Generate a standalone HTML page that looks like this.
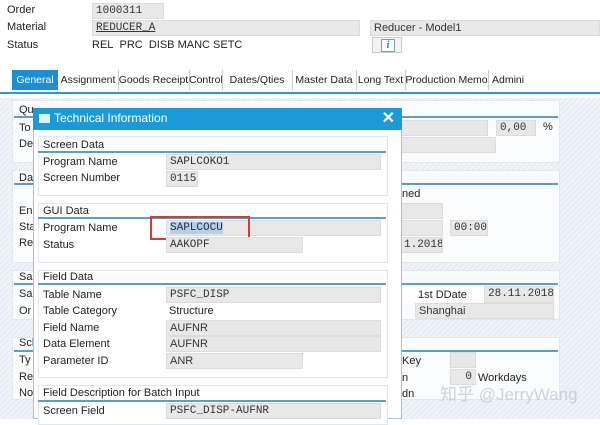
<html><head><style>
body{margin:0;width:600px;height:419px;overflow:hidden;position:relative;background:#fff;font-family:"Liberation Sans",sans-serif;font-size:11px;color:#222}
.a{position:absolute;white-space:nowrap}
.f{position:absolute;background:#e8e8e8;border:1px solid #dcdcdc;box-sizing:border-box;font-family:"Liberation Mono",monospace;font-size:11px;line-height:14px;padding-left:3px;color:#333;white-space:nowrap;overflow:hidden}
.p{position:absolute;background:#fafbfc;border:1px solid #e3e7ec;box-sizing:border-box}
.ln{position:absolute;height:2px;background:#5b9ec9}
.tab{position:absolute;top:70px;height:20px;line-height:20px;text-align:center;border-right:1px solid #ccc;font-size:10.5px;white-space:nowrap;overflow:hidden}
</style></head><body>
<div class="a" style="left:7px;top:4px">Order</div>
<div class="f" style="left:92px;top:3px;width:72px;height:16px">1000311</div>
<div class="a" style="left:7px;top:21px">Material</div>
<div class="f" style="left:92px;top:20px;width:268px;height:16px;text-decoration:underline">REDUCER_A</div>
<div class="f" style="left:370px;top:20px;width:230px;height:16px;font-family:'Liberation Sans',sans-serif">Reducer - Model1</div>
<div class="a" style="left:7px;top:39px">Status</div>
<div class="a" style="left:92px;top:39px">REL&nbsp; PRC&nbsp; DISB MANC SETC</div>
<div class="a" style="left:372px;top:37px;width:30px;height:16px;background:#f3f3f3;border:1px solid #ccc;box-sizing:border-box"><div style="position:absolute;left:8px;top:1px;width:12px;height:11px;border:1px solid #6aa;background:#fff;color:#1a7ab0;font:italic bold 10px 'Liberation Serif';text-align:center;line-height:11px">i</div></div>
<div class="tab" style="left:12px;width:46px;background:#1a8fd4;color:#fff;border:none">General</div>
<div class="tab" style="left:58px;width:60px">Assignment</div>
<div class="tab" style="left:118px;width:71px">Goods Receipt</div>
<div class="tab" style="left:189px;width:33px">Control</div>
<div class="tab" style="left:222px;width:70px">Dates/Qties</div>
<div class="tab" style="left:292px;width:64px">Master Data</div>
<div class="tab" style="left:356px;width:49px">Long Text</div>
<div class="tab" style="left:405px;width:83px">Production Memo</div>
<div class="tab" style="left:488px;width:40px;border:none;text-align:left;padding-left:4px">Admini</div>
<div class="a" style="left:0;top:92px;width:600px;height:2px;background:#2c98d4"></div>
<div class="a" style="left:0;top:98px;width:600px;height:321px;background:repeating-linear-gradient(135deg,#e6edf4 0 2px,#f1f5f9 2px 4px)"></div>
<div class="p" style="left:12px;top:100px;width:548px;height:63px"></div><div class="ln" style="left:14px;top:116px;width:544px"></div>
<div class="p" style="left:12px;top:170px;width:548px;height:93px"></div><div class="ln" style="left:14px;top:183px;width:544px"></div>
<div class="p" style="left:12px;top:270px;width:548px;height:50px"></div><div class="ln" style="left:14px;top:283px;width:544px"></div>
<div class="p" style="left:12px;top:337px;width:548px;height:63px"></div><div class="ln" style="left:14px;top:350px;width:544px"></div>
<div class="a" style="left:19px;top:104px">Qu</div><div class="a" style="left:19px;top:122px">To</div><div class="a" style="left:19px;top:138px">De</div>
<div class="a" style="left:19px;top:172px">Da</div><div class="a" style="left:19px;top:205px">En</div><div class="a" style="left:19px;top:221px">Sta</div><div class="a" style="left:19px;top:237px">Re</div>
<div class="a" style="left:19px;top:271px">Sal</div><div class="a" style="left:19px;top:288px">Sal</div><div class="a" style="left:19px;top:305px">Or</div>
<div class="a" style="left:19px;top:337px">Sch</div><div class="a" style="left:19px;top:354px">Ty</div><div class="a" style="left:19px;top:371px">Re</div><div class="a" style="left:19px;top:387px">No</div>
<div class="f" style="left:400px;top:120px;width:88px;height:16px"></div>
<div class="f" style="left:496px;top:120px;width:40px;height:16px">0,00</div><div class="a" style="left:543px;top:121px">%</div>
<div class="f" style="left:400px;top:137px;width:96px;height:16px"></div>
<div class="a" style="left:402px;top:188px">ned</div>
<div class="f" style="left:400px;top:203px;width:43px;height:16px"></div>
<div class="f" style="left:400px;top:220px;width:43px;height:16px"></div>
<div class="f" style="left:450px;top:220px;width:38px;height:16px">00:00</div>
<div class="f" style="left:400px;top:237px;width:43px;height:16px">1.2018</div>
<div class="a" style="left:404px;top:287px;width:76px;height:17px;background:#fff"></div>
<div class="a" style="left:418px;top:289px">1st DDate</div>
<div class="f" style="left:484px;top:286px;width:70px;height:17px">28.11.2018</div>
<div class="f" style="left:415px;top:303px;width:139px;height:16px;font-family:'Liberation Sans',sans-serif">Shanghai</div>
<div class="a" style="left:402px;top:355px">Key</div><div class="f" style="left:450px;top:352px;width:26px;height:16px"></div>
<div class="a" style="left:402px;top:372px">n</div><div class="f" style="left:450px;top:369px;width:26px;height:16px;text-align:right;padding-right:3px">0</div><div class="a" style="left:478px;top:372px">Workdays</div>
<div class="a" style="left:402px;top:388px">dn</div>
<div class="a" style="left:440px;top:380px;font-size:17px;color:rgba(190,200,210,.8);font-family:'Liberation Sans','Noto Sans CJK SC',sans-serif">知乎 @JerryWang</div>
<div class="a" style="left:33px;top:108px;width:369px;height:311px;background:#fff;border:1px solid #9cc5e0;box-sizing:border-box"></div>
<div class="a" style="left:33px;top:108px;width:369px;height:22px;background:#1a9ad6;color:#fff;font-size:12px;line-height:21px">
<span style="display:inline-block;width:11px;height:9px;background:#dff0fb;margin:0 4px 0 6px;vertical-align:-1px"></span>Technical Information
<span style="position:absolute;right:7px;top:0;font-size:16px;font-weight:bold">✕</span></div>
<div class="p" style="left:38px;top:136px;width:350px;height:60px;background:#fff"></div>
<div class="a" style="left:43px;top:139px">Screen Data</div><div class="ln" style="left:38px;top:151px;width:348px"></div>
<div class="a" style="left:43px;top:156px">Program Name</div><div class="f" style="left:166px;top:154px;width:215px;height:16px">SAPLCOKO1</div>
<div class="a" style="left:43px;top:172px">Screen Number</div><div class="f" style="left:166px;top:171px;width:32px;height:16px">0115</div>
<div class="p" style="left:38px;top:203px;width:350px;height:60px;background:#fff"></div>
<div class="a" style="left:43px;top:205px">GUI Data</div><div class="ln" style="left:38px;top:217px;width:348px"></div>
<div class="a" style="left:43px;top:222px">Program Name</div><div class="f" style="left:166px;top:220px;width:215px;height:16px"><span style="background:#b8cde6;color:#234">SAPLCOCU</span></div>
<div class="a" style="left:150px;top:216px;width:100px;height:24px;border:2px solid #d43a3a;box-sizing:border-box"></div>
<div class="a" style="left:43px;top:239px">Status</div><div class="f" style="left:166px;top:237px;width:137px;height:16px">AAKOPF</div>
<div class="p" style="left:38px;top:270px;width:350px;height:108px;background:#fff"></div>
<div class="a" style="left:43px;top:271px">Field Data</div><div class="ln" style="left:38px;top:283px;width:348px"></div>
<div class="a" style="left:43px;top:289px">Table Name</div><div class="f" style="left:166px;top:287px;width:215px;height:16px">PSFC_DISP</div>
<div class="a" style="left:43px;top:305px">Table Category</div><div class="a" style="left:169px;top:305px">Structure</div>
<div class="a" style="left:43px;top:322px">Field Name</div><div class="f" style="left:166px;top:320px;width:215px;height:16px;font-family:'Liberation Sans'">AUFNR</div>
<div class="a" style="left:43px;top:338px">Data Element</div><div class="f" style="left:166px;top:336px;width:215px;height:16px;font-family:'Liberation Sans'">AUFNR</div>
<div class="a" style="left:43px;top:355px">Parameter ID</div><div class="f" style="left:166px;top:353px;width:137px;height:16px;font-family:'Liberation Sans'">ANR</div>
<div class="p" style="left:38px;top:385px;width:350px;height:40px;background:#fff"></div>
<div class="a" style="left:43px;top:387px">Field Description for Batch Input</div><div class="ln" style="left:38px;top:400px;width:348px"></div>
<div class="a" style="left:43px;top:405px">Screen Field</div><div class="f" style="left:166px;top:403px;width:215px;height:16px">PSFC_DISP-AUFNR</div>
</body></html>
